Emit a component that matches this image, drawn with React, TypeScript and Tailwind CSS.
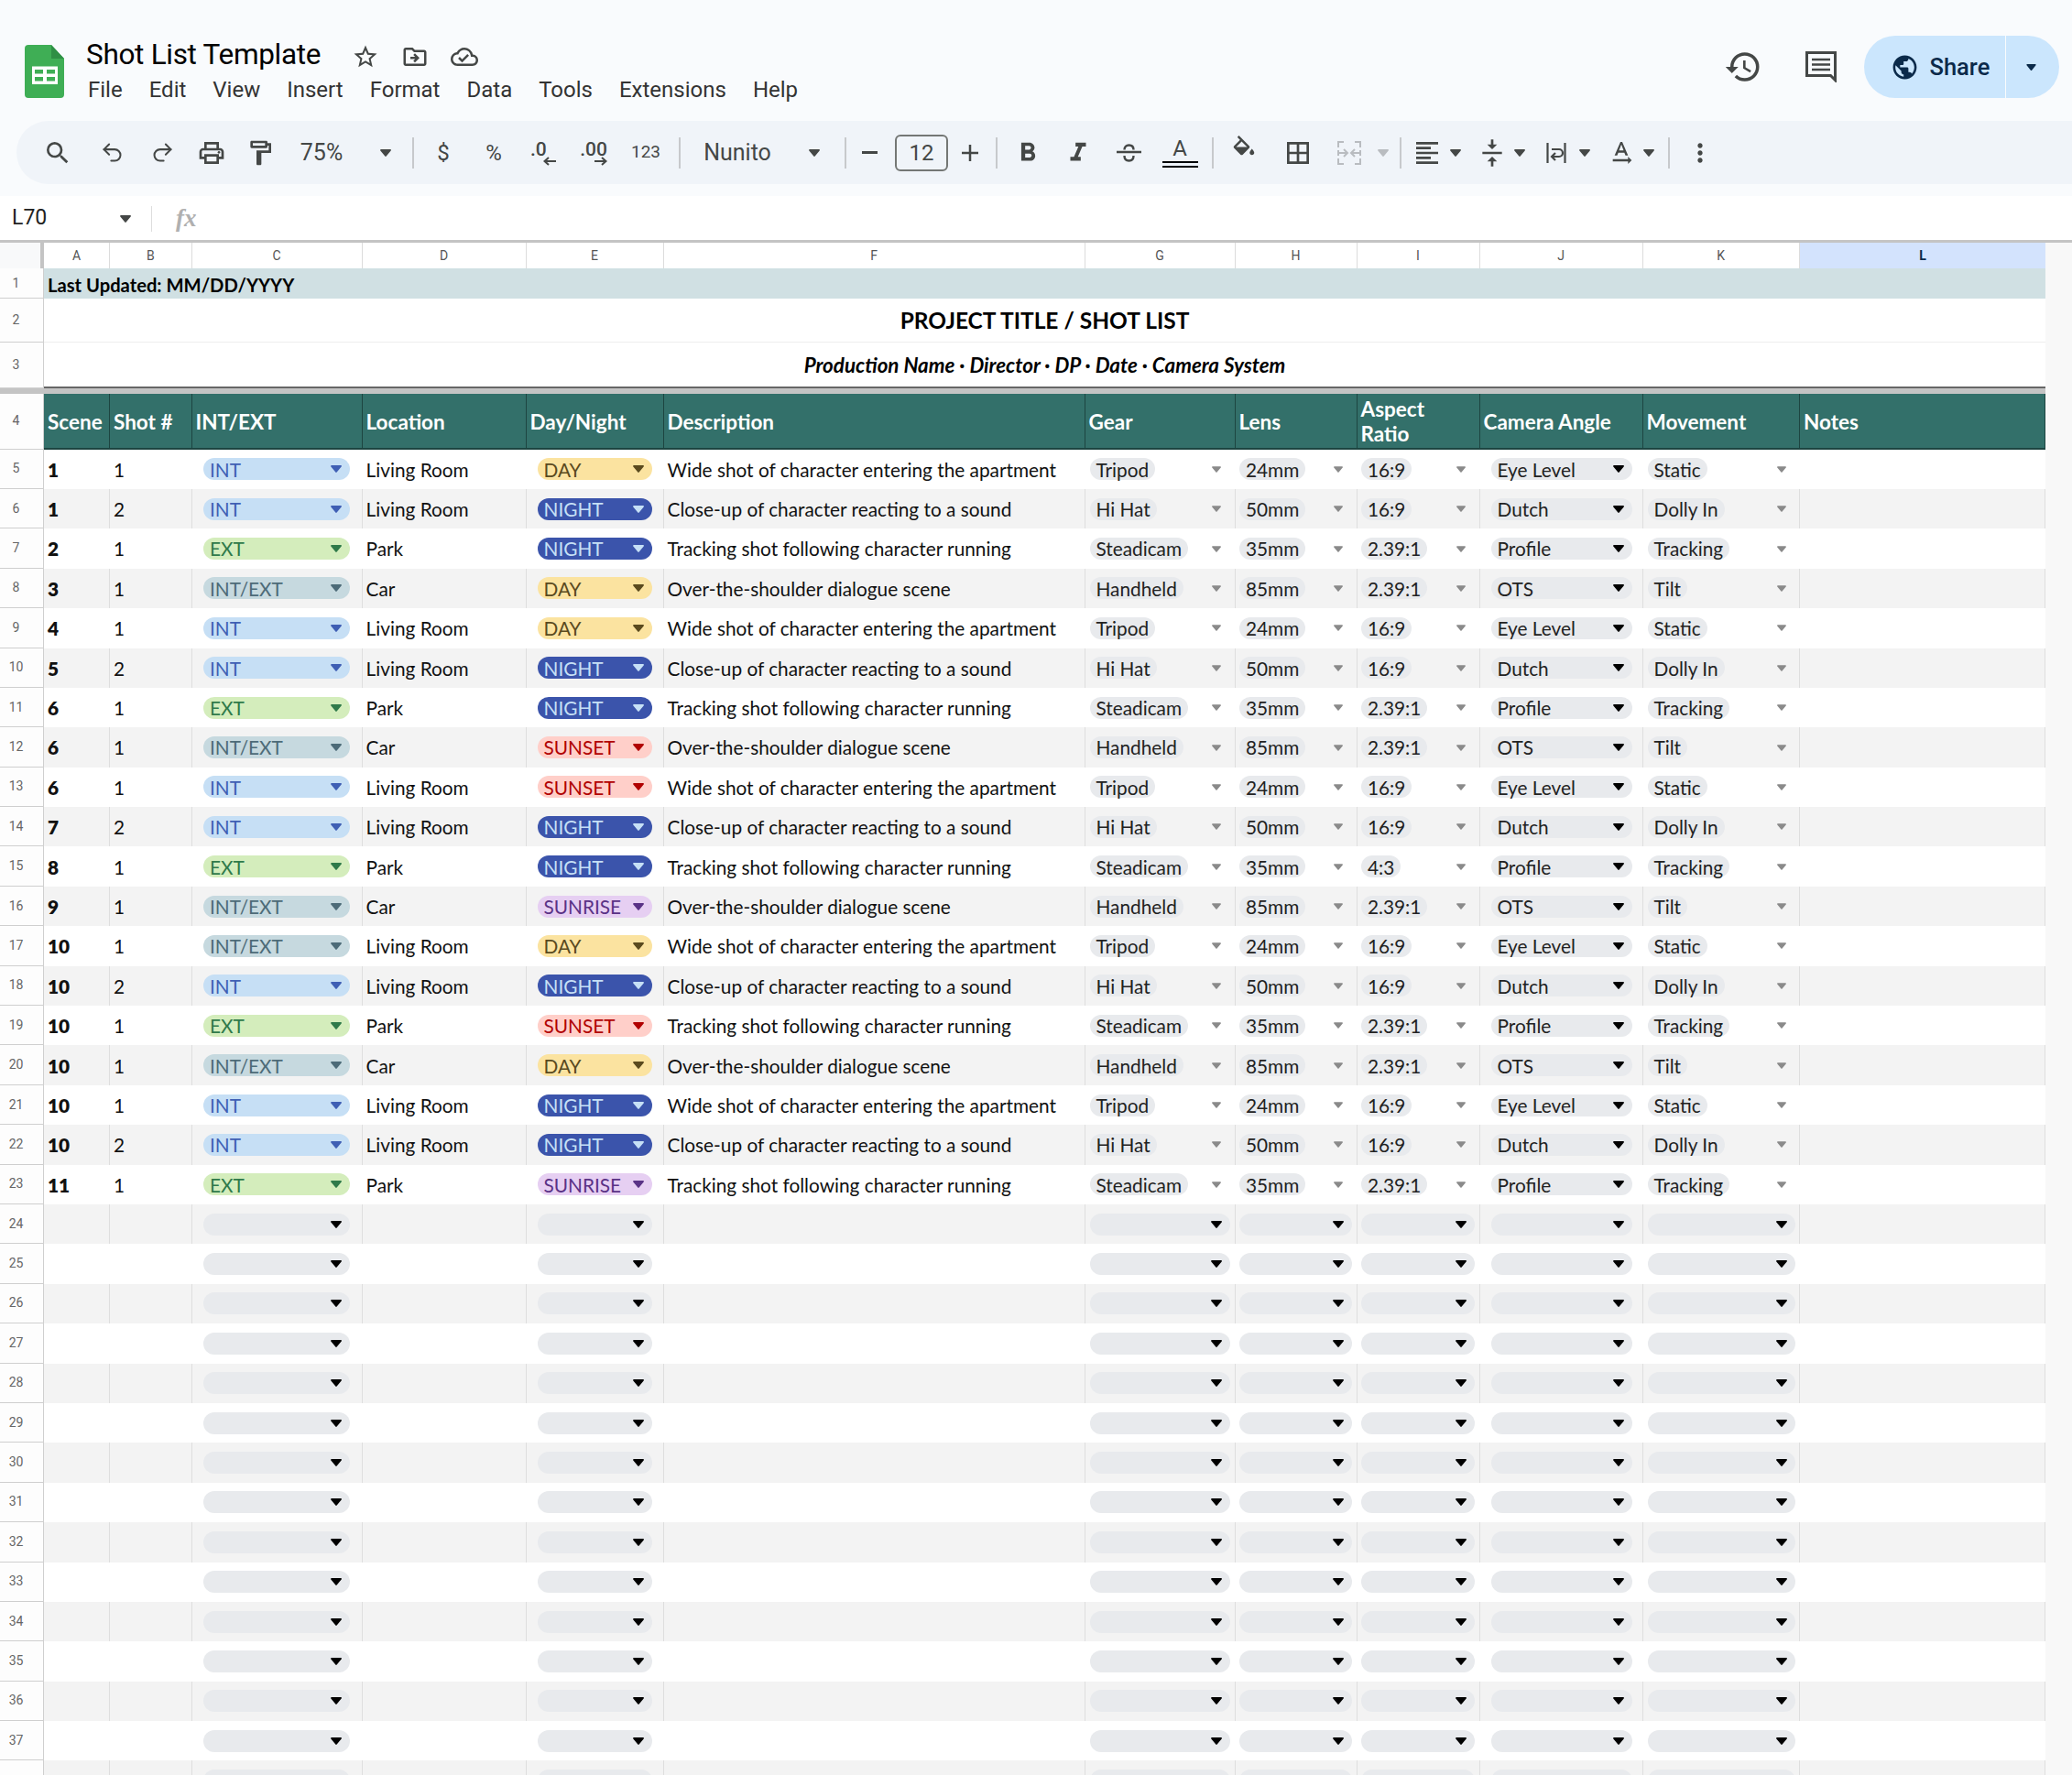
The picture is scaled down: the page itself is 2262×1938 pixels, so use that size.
import type { ReactNode } from 'react';
import {
  MdSearch, MdOutlinePrint, MdOutlineFormatPaint, MdFormatBold, MdFormatItalic,
  MdBorderAll, MdFormatAlignLeft, MdVerticalAlignCenter, MdTextRotationNone,
  MdMoreVert, MdStarBorder, MdOutlineDriveFileMove, MdOutlineCloudDone, MdHistory, MdPublic,
} from 'react-icons/md';
import { Undo2, Redo2 } from 'lucide-react';

const gridCols = 'grid grid-cols-[48px_72px_89.5px_186px_179px_150px_460px_164px_133px_134px_178px_171.5px_268px]';

const shots = [
  { location: 'Living Room', description: 'Wide shot of character entering the apartment', gear: 'Tripod', lens: '24mm', ratio: '16:9', angle: 'Eye Level', move: 'Static' },
  { location: 'Living Room', description: 'Close-up of character reacting to a sound', gear: 'Hi Hat', lens: '50mm', ratio: '16:9', angle: 'Dutch', move: 'Dolly In' },
  { location: 'Park', description: 'Tracking shot following character running', gear: 'Steadicam', lens: '35mm', ratio: '2.39:1', angle: 'Profile', move: 'Tracking' },
  { location: 'Car', description: 'Over-the-shoulder dialogue scene', gear: 'Handheld', lens: '85mm', ratio: '2.39:1', angle: 'OTS', move: 'Tilt' },
];

// scene, shot, int/ext, day/night, which shot template
const rows: [number, number, string, string, number][] = [
  [1, 1, 'INT', 'DAY', 0], [1, 2, 'INT', 'NIGHT', 1], [2, 1, 'EXT', 'NIGHT', 2], [3, 1, 'INT/EXT', 'DAY', 3],
  [4, 1, 'INT', 'DAY', 0], [5, 2, 'INT', 'NIGHT', 1], [6, 1, 'EXT', 'NIGHT', 2], [6, 1, 'INT/EXT', 'SUNSET', 3],
  [6, 1, 'INT', 'SUNSET', 0], [7, 2, 'INT', 'NIGHT', 1], [8, 1, 'EXT', 'NIGHT', 2], [9, 1, 'INT/EXT', 'SUNRISE', 3],
  [10, 1, 'INT/EXT', 'DAY', 0], [10, 2, 'INT', 'NIGHT', 1], [10, 1, 'EXT', 'SUNSET', 2], [10, 1, 'INT/EXT', 'DAY', 3],
  [10, 1, 'INT', 'NIGHT', 0], [10, 2, 'INT', 'NIGHT', 1], [11, 1, 'EXT', 'SUNRISE', 2],
];

const chipColors: Record<string, string> = {
  INT: 'bg-[#c6dff5] text-[#3f5fb4]',
  EXT: 'bg-[#d4edbc] text-[#2f7a4a]',
  'INT/EXT': 'bg-[#c6d9df] text-[#4d6b78]',
  DAY: 'bg-[#fbe3a0] text-[#5a4a1e]',
  NIGHT: 'bg-[#3b54ab] text-[#c6e0f6]',
  SUNSET: 'bg-[#ffcfc9] text-[#b10202]',
  SUNRISE: 'bg-[#e6cff2] text-[#5a3286]',
};

function Caret({ className = 'w-3 h-2' }: { className?: string }) {
  return (
    <svg viewBox="0 0 12 8" className={`shrink-0 fill-current ${className}`}>
      <path d="M1 0h10c.8 0 1.2.9.7 1.5L6.7 7.6c-.4.5-1 .5-1.4 0L.3 1.5C-.2.9.2 0 1 0z" />
    </svg>
  );
}

function Slot({ className = '', children }: { className?: string; children?: ReactNode }) {
  return <div className={`w-7 h-full shrink-0 flex items-center justify-center whitespace-nowrap ${className}`}>{children}</div>;
}

function Sep({ className = '' }: { className?: string }) {
  return (
    <Slot className={className}>
      <div className="w-[2px] h-[34px] bg-[#c7c9cc]" />
    </Slot>
  );
}

function SmallArrow({ flip = false }: { flip?: boolean }) {
  return (
    <svg viewBox="0 0 14 10" className={`w-[14px] h-[10px] ${flip ? 'rotate-180' : ''}`}>
      <path d="M0 5h12M8 1l4.5 4L8 9" fill="none" stroke="#444746" strokeWidth="2" />
    </svg>
  );
}

function Toolbar() {
  const icon = 'w-8 h-8 shrink-0';
  const label = "font-['Roboto',sans-serif] text-[#444746]";
  return (
    <div className="h-[69px] ml-[18px] pl-[31px] rounded-l-[35px] bg-[#f0f4f9] flex items-center text-[#444746]">
      <Slot><MdSearch className={icon} /></Slot>
      <Slot className="ml-[31px]"><Undo2 className="w-[27px] h-[27px] shrink-0" strokeWidth={1.8} /></Slot>
      <Slot className="ml-[27px]"><Redo2 className="w-[27px] h-[27px] shrink-0" strokeWidth={1.8} /></Slot>
      <Slot className="ml-[26px]"><MdOutlinePrint className={icon} /></Slot>
      <Slot className="ml-[25px]"><MdOutlineFormatPaint className={icon} /></Slot>
      <Slot className={`ml-[39px] text-[25px] ${label}`}>75%</Slot>
      <Slot className="ml-[42px]"><Caret /></Slot>
      <Sep className="ml-[2px]" />
      <Slot className={`ml-[5px] text-[24px] ${label}`}>$</Slot>
      <Slot className={`ml-[27px] text-[24px] ${label}`}>%</Slot>
      <Slot className="ml-[26px]">
        <div className={`w-7 flex flex-col leading-none text-[21px] font-medium ${label}`}>
          <span className="self-start">.0</span>
          <span className="-mt-[3px] self-end"><SmallArrow flip /></span>
        </div>
      </Slot>
      <Slot className="ml-[28px]">
        <div className={`w-7 flex flex-col items-end leading-none text-[21px] font-medium ${label}`}>
          <span>.00</span>
          <span className="-mt-[3px]"><SmallArrow /></span>
        </div>
      </Slot>
      <Slot className={`ml-[28px] text-[19px] ${label}`}>123</Slot>
      <Sep className="ml-[9px]" />
      <Slot className={`ml-[35px] text-[25px] ${label}`}>Nunito</Slot>
      <Slot className="ml-[56px]"><Caret /></Slot>
      <Sep className="ml-[6px]" />
      <Slot className="-ml-[2px]"><div className="w-[17px] h-[2.5px] bg-[#444746]" /></Slot>
      <Slot className="ml-[29px]">
        <div className={`w-[58px] h-10 shrink-0 rounded-md border-2 border-[#747775] flex items-center justify-center text-[24px] ${label}`}>12</div>
      </Slot>
      <Slot className="ml-[25px]">
        <svg viewBox="0 0 18 18" className="w-[18px] h-[18px]"><path d="M0 9h18M9 0v18" stroke="#444746" strokeWidth="2.5" /></svg>
      </Slot>
      <Sep className="ml-[1px]" />
      <Slot className="ml-[6px]"><MdFormatBold className="w-[34px] h-[34px] shrink-0" /></Slot>
      <Slot className="ml-[27px]"><MdFormatItalic className="w-[34px] h-[34px] shrink-0" /></Slot>
      <Slot className="ml-[27px]">
        <svg viewBox="0 0 27 20" className="w-[27px] h-[20px] shrink-0" fill="none" stroke="currentColor" strokeWidth="2.4">
          <path d="M0 9h27M8.5 6.5C8.5 3.5 10.5 1.5 13.5 1.5s5 2 5 5M8.5 13c0 3.5 2 5.5 5 5.5s5-2 5-5.5" />
        </svg>
      </Slot>
      <Slot className="ml-[28px]">
        <div className="flex flex-col items-center -mt-[2px]">
          <span className={`text-[24px] leading-[28px] ${label}`}>A</span>
          <div className="w-[39px] h-[7px] shrink-0 border-y-2 border-black" />
        </div>
      </Slot>
      <Sep className="ml-[8px]" />
      <Slot className="ml-[6px]">
        <svg viewBox="0 0 24 24" className="w-[30px] h-[30px] shrink-0 -mt-2 fill-current">
          <path d="M16.56 8.94L7.62 0 6.21 1.41l2.38 2.38-5.15 5.15c-.59.59-.59 1.54 0 2.12l5.5 5.5c.29.29.68.44 1.06.44s.77-.15 1.06-.44l5.5-5.5c.59-.58.59-1.53 0-2.12zM5.21 10L10 5.21 14.79 10H5.21zM19 11.5s-2 2.17-2 3.5c0 1.1.9 2 2 2s2-.9 2-2c0-1.33-2-3.5-2-3.5z" />
        </svg>
      </Slot>
      <Slot className="ml-[31px]"><MdBorderAll className="w-8 h-8 shrink-0" /></Slot>
      <Slot className="ml-[28px] text-[#b9bcc0]">
        <svg viewBox="0 0 26 26" className="w-[26px] h-[26px] shrink-0" fill="none" stroke="currentColor" strokeWidth="2">
          <path d="M7 1H1v6M1 10v6M1 19v6h6M19 1h6v6M25 10v6M25 19v6h-6M2 13h8M7 9l4 4-4 4M24 13h-8M19 9l-4 4 4 4" />
        </svg>
      </Slot>
      <Slot className="ml-[9px] text-[#b9bcc0]"><Caret /></Slot>
      <Sep className="-ml-[9px]" />
      <Slot className="ml-[1px]"><MdFormatAlignLeft className={icon} /></Slot>
      <Slot className="ml-[3px]"><Caret /></Slot>
      <Slot className="ml-[12px]"><MdVerticalAlignCenter className={icon} /></Slot>
      <Slot className="ml-[2px]"><Caret /></Slot>
      <Slot className="ml-[12px]">
        <svg viewBox="0 0 22 22" className="w-[22px] h-[22px] shrink-0" fill="none" stroke="currentColor" strokeWidth="2.2">
          <path d="M1.5 0v22M20.5 0v22M6 7h8a3 3 0 0 1 0 8H7M10 11l-4 4 4 4" />
        </svg>
      </Slot>
      <Slot className="ml-[3px]"><Caret /></Slot>
      <Slot className="ml-[12px]"><MdTextRotationNone className={icon} /></Slot>
      <Slot className="ml-[2px]"><Caret /></Slot>
      <Sep className="-ml-[6px]" />
      <Slot className="ml-[6px]"><MdMoreVert className={icon} /></Slot>
    </div>
  );
}

function SheetsLogo() {
  return (
    <svg viewBox="0 0 43 58" className="w-[43px] h-[58px] shrink-0">
      <path d="M4 0h25l14 15v39a4 4 0 0 1-4 4H4a4 4 0 0 1-4-4V4a4 4 0 0 1 4-4z" fill="#3fae55" />
      <path d="M29 0l14 15H29z" fill="#2f8f45" />
      <path d="M8 23.5h28v19.5H8z" fill="#fff" />
      <path d="M11 27h9v4.5h-9zM24 27h9v4.5h-9zM11 35h9v4.5h-9zM24 35h9v4.5h-9z" fill="#3fae55" />
    </svg>
  );
}

function TopBar() {
  const menus = ['File', 'Edit', 'View', 'Insert', 'Format', 'Data', 'Tools', 'Extensions', 'Help'];
  return (
    <div className="h-[132px] flex font-['Roboto',sans-serif]">
      <div className="ml-[27px] mt-[49px]"><SheetsLogo /></div>
      <div className="ml-[24px] mt-[38px]">
        <div className="h-[44px] flex items-center">
          <span className="w-[256px] text-[31.5px] text-black tracking-[-0.3px] whitespace-nowrap">Shot List Template</span>
          <div className="flex items-center ml-[34px] mt-1 gap-[24px] text-[#444746]">
            <MdStarBorder className="w-[30px] h-[30px]" />
            <MdOutlineDriveFileMove className="w-[30px] h-[30px]" />
            <MdOutlineCloudDone className="w-[30px] h-[30px]" />
          </div>
        </div>
        <div className="flex gap-[29px] ml-[2px] -mt-[1px] text-[24px] leading-[34px] text-[#333]">
          {menus.map((m) => <span key={m}>{m}</span>)}
        </div>
      </div>
      <div className="ml-auto mt-[39px] mr-[14px] h-[68px] flex items-center text-[#444746]">
        <MdHistory className="w-[42px] h-[42px]" />
        <svg viewBox="0 0 34 34" className="w-[34px] h-[34px] ml-[47px] fill-none stroke-current">
          <path d="M1.5 1.5h31v30l-5-5H1.5z" strokeWidth="3" />
          <path d="M7 9h20M7 14.5h20M7 20h20" strokeWidth="2.5" />
        </svg>
        <div className="ml-[30px] h-full flex text-[#0b2a4a]">
          <div className="w-[154px] h-full pl-[29px] rounded-l-[34px] bg-[#cbe6fd] flex items-center gap-[12px]">
            <MdPublic className="w-[31px] h-[31px]" />
            <span className="text-[25.5px] font-medium">Share</span>
          </div>
          <div className="w-[58px] h-full ml-[1.5px] pl-[22px] rounded-r-[34px] bg-[#cbe6fd] flex items-center">
            <Caret className="w-[11px] h-[7px]" />
          </div>
        </div>
      </div>
    </div>
  );
}

function FormulaBar() {
  return (
    <div className="h-[48px] mt-[13px] pt-[1px] bg-white flex items-center">
      <span className="ml-[13px] w-[118px] text-[23px] text-[#222] font-['Roboto',sans-serif]">L70</span>
      <Caret className="w-[12px] h-2 text-[#444746]" />
      <div className="ml-[22px] w-px h-7 bg-[#ddd]" />
      <span className="ml-[26px] font-['Liberation_Serif',serif] italic font-bold text-[27px] text-[#b0b0b0]">fx</span>
    </div>
  );
}

function ColumnHeaders() {
  const letters = ['A', 'B', 'C', 'D', 'E', 'F', 'G', 'H', 'I', 'J', 'K'];
  return (
    <div className={`${gridCols} h-[28px] bg-white font-['Roboto',sans-serif] text-[14px] text-[#555]`}>
      <div className="bg-[#f8f9fa] border-r-4 border-[#c4c4c4]" />
      {letters.map((l) => (
        <div key={l} className="flex items-center justify-center border-r border-[#dcdcdc]">{l}</div>
      ))}
      <div className="flex items-center justify-center bg-[#d3e3fd] font-bold text-[#0b2a4a]">L</div>
    </div>
  );
}

function RowNumber({ n }: { n?: number }) {
  return (
    <div className="pr-[12px] flex items-center justify-center bg-[#fdfdfd] border-r border-b border-[#cfcfcf] font-['Roboto',sans-serif] text-[14px] text-[#666]">
      {n}
    </div>
  );
}

// chip that fills the cell, caret at the right end
function FullChip({ value, color, caret }: { value?: string; color: string; caret: string }) {
  return (
    <div className={`w-full h-6 pl-[7px] pr-[9px] rounded-xl flex items-center justify-between ${color}`}>
      <span className="whitespace-nowrap">{value}</span>
      <Caret className={`w-3 h-2 ${caret}`} />
    </div>
  );
}

// chip hugs the text, caret stays at the column's right side
function HugChip({ value }: { value: string }) {
  return (
    <div className="w-full h-6 pr-[10px] flex items-center justify-between">
      <span className="h-6 px-[7px] rounded-xl bg-[#e8eaed] text-[#222] flex items-center whitespace-nowrap">{value}</span>
      <Caret className="w-[10px] h-[7px] text-[#8a8a8a]" />
    </div>
  );
}

function DataRow({ n, row }: { n: number; row?: (typeof rows)[number] }) {
  const stripe = n % 2 === 0 ? 'bg-[#f3f3f3]' : 'bg-white';
  const line = n % 2 === 0 ? 'border-[#dedede]' : 'border-white';
  const cell = `h-full border-r ${line} flex items-center`;
  const shot = row ? shots[row[4]] : undefined;
  const ratio = row && n === 15 ? '4:3' : shot?.ratio;
  return (
    <div className={`${gridCols} h-[43.4px] ${stripe} font-['Lato',sans-serif] text-[20.8px] text-[#111]`}>
      {/* row 38 is cut by the window, its number does not show */}
      <RowNumber n={n < 38 ? n : undefined} />
      <div className={`${cell} pl-1 font-extrabold`}>{row?.[0]}</div>
      <div className={`${cell} pl-1`}>{row?.[1]}</div>
      <div className={`${cell} px-[12.5px]`}>
        <FullChip value={row?.[2]} color={row ? chipColors[row[2]] : 'bg-[#e8eaed]'} caret={row ? '' : 'text-black'} />
      </div>
      <div className={`${cell} pl-1`}>{shot?.location}</div>
      <div className={`${cell} px-3`}>
        <FullChip value={row?.[3]} color={row ? chipColors[row[3]] : 'bg-[#e8eaed]'} caret={row ? '' : 'text-black'} />
      </div>
      <div className={`${cell} pl-1 whitespace-nowrap`}>{shot?.description}</div>
      <div className={`${cell} pl-[5px] pr-[4.5px]`}>
        {shot ? <HugChip value={shot.gear} /> : <FullChip color="bg-[#e8eaed]" caret="text-black" />}
      </div>
      <div className={`${cell} px-[4.5px]`}>
        {shot ? <HugChip value={shot.lens} /> : <FullChip color="bg-[#e8eaed]" caret="text-black" />}
      </div>
      <div className={`${cell} px-[4.5px]`}>
        {ratio ? <HugChip value={ratio} /> : <FullChip color="bg-[#e8eaed]" caret="text-black" />}
      </div>
      <div className={`${cell} pl-[12px] pr-[11px]`}>
        <FullChip value={shot?.angle} color="bg-[#e8eaed] text-[#222]" caret="text-black" />
      </div>
      <div className={`${cell} pl-[5px] pr-[4.5px]`}>
        {shot ? <HugChip value={shot.move} /> : <FullChip color="bg-[#e8eaed]" caret="text-black" />}
      </div>
      <div className={`h-full border-r ${line}`} />
    </div>
  );
}

function Sheet() {
  const headers = ['Scene', 'Shot #', 'INT/EXT', 'Location', 'Day/Night', 'Description', 'Gear', 'Lens', 'Aspect Ratio', 'Camera Angle', 'Movement', 'Notes'];
  const blank = Array.from({ length: 15 }, (_, i) => i + 24);
  return (
    <div className="font-['Lato',sans-serif] text-black">
      <div className={`${gridCols} h-[33.4px]`}>
        <RowNumber n={1} />
        <div className="col-span-12 pl-1 pt-[2px] flex items-center bg-[#d0e0e3] text-[20.2px] font-bold">Last Updated: MM/DD/YYYY</div>
      </div>
      <div className={`${gridCols} h-[47.3px]`}>
        <RowNumber n={2} />
        <div className="col-span-12 pt-[1px] flex items-center justify-center bg-white border-b border-[#eeeeee] text-[24.5px] font-bold">PROJECT TITLE / SHOT LIST</div>
      </div>
      <div className={`${gridCols} h-[50.3px]`}>
        <RowNumber n={3} />
        <div className="col-span-12 pt-[1px] flex items-center justify-center bg-white border-b-2 border-[#666] text-[22.4px] font-bold italic">Production Name · Director · DP · Date · Camera System</div>
      </div>
      <div className="h-[5.6px] bg-[#c4c4c4]" />
      <div className={`${gridCols} h-[61px]`}>
        <RowNumber n={4} />
        {headers.map((h) => (
          <div key={h} className="pl-1 pr-1 pt-[2px] flex items-center bg-[#33706a] border-r border-b-2 border-[#1d4541] text-white text-[22.5px] leading-[27px] font-bold">
            {h}
          </div>
        ))}
      </div>
      {rows.map((row, i) => <DataRow key={i} n={i + 5} row={row} />)}
      {blank.map((n) => <DataRow key={n} n={n} />)}
    </div>
  );
}

export default function App() {
  return (
    <div className="w-[2262px] h-[1938px] overflow-hidden bg-[#f9fbfd]">
      <TopBar />
      <Toolbar />
      <FormulaBar />
      <div className="h-[3px] bg-[#c4c4c4]" />
      <div className="flex bg-[#f8f8f8]">
        <div className="w-[2233px]">
          <ColumnHeaders />
          <Sheet />
        </div>
      </div>
    </div>
  );
}
